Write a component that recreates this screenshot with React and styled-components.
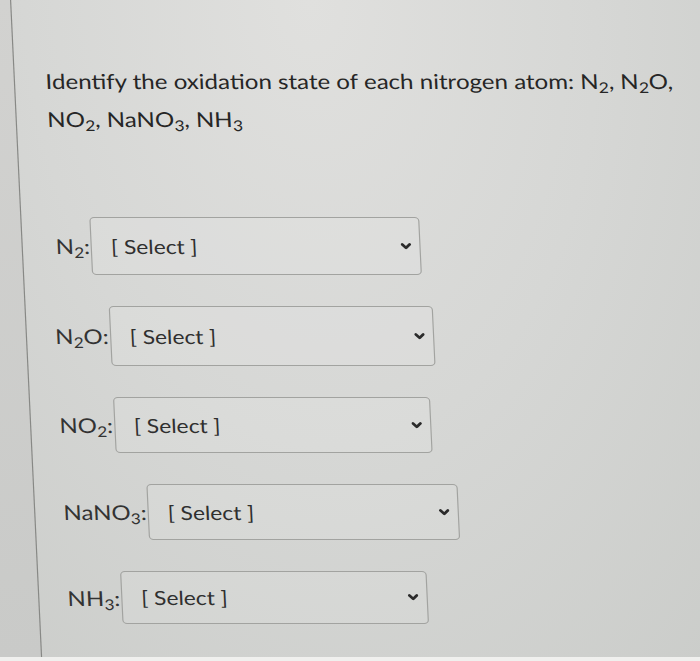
import React from 'react';
import styled, { createGlobalStyle } from 'styled-components';

// The reference is a photo of a screen: slightly skewed and stretched sideways.
const GlobalStyle = createGlobalStyle`
  html, body {
    margin: 0;
    padding: 0;
    background: #f0f0ee;
  }
  body {
    font-family: Lato, "Open Sans", sans-serif;
  }
`;

const Page = styled.div`
  width: 700px;
  height: 657px;
  overflow: hidden;
  background: linear-gradient(180deg, #d2d2d0 0%, #c9cac8 100%);
`;

const Sheet = styled.div`
  box-sizing: border-box;
  width: 640px;
  height: 700px;
  margin-left: 10px;
  padding: 62px 0 0 24px;
  border-left: 1.5px solid #878885;
  background: radial-gradient(ellipse at 40% 0%, #e0e0de 0%, #d6d7d5 45%, #c8cac7 100%);
  transform: skewX(2.7deg) scaleX(1.17);
  transform-origin: top left;
`;

const Question = styled.p`
  margin: 0 0 0 2px;
  font-size: 20.6px;
  line-height: 38px;
  color: #262626;
`;

const Sub = styled.sub`
  font-size: 72%;
  vertical-align: -0.28em;
  line-height: 0;
`;

const Rows = styled.div`
  display: flex;
  flex-direction: column;
  gap: 31px;
  margin-top: 79px;
`;

const Row = styled.div`
  display: flex;
  align-items: center;
  padding-left: ${(p) => p.$indent}px;
`;

const Label = styled.span`
  font-size: 20.5px;
  color: #333333;
  margin-right: 1px;
`;

const Dropdown = styled.div`
  box-sizing: border-box;
  display: flex;
  align-items: center;
  justify-content: space-between;
  width: ${(p) => p.$width}px;
  height: ${(p) => p.$height}px;
  padding: 0 7px 0 16px;
  border: 1.5px solid #a2a3a0;
  border-radius: 4px;
  background: rgba(255, 255, 255, 0.1);
  font-size: 19.5px;
  color: #2f2f2f;
`;

const Chevron = () => (
  <svg width="9" height="7" viewBox="0 0 9 7">
    <path d="M1.3 1.4 L4.5 4.9 L7.7 1.4" fill="none" stroke="#2b2b2b" strokeWidth="2.5" strokeLinecap="round" strokeLinejoin="round" />
  </svg>
);

const items = [
  { label: <>N<Sub>2</Sub>:</>, indent: 4, width: 282, height: 58 },
  { label: <>N<Sub>2</Sub>O:</>, indent: 0, width: 277, height: 60 },
  { label: <>NO<Sub>2</Sub>:</>, indent: 0, width: 271, height: 56 },
  { label: <>NaNO<Sub>3</Sub>:</>, indent: 0, width: 266, height: 56 },
  { label: <>NH<Sub>3</Sub>:</>, indent: 0, width: 262, height: 53 },
];

export default function App() {
  return (
    <>
      <GlobalStyle />
      <Page>
        <Sheet>
          <Question>
            Identify the oxidation state of each nitrogen atom: N<Sub>2</Sub>, N<Sub>2</Sub>O,
            <br />
            NO<Sub>2</Sub>, NaNO<Sub>3</Sub>, NH<Sub>3</Sub>
          </Question>
          <Rows>
            {items.map((it, i) => (
              <Row key={i} $indent={it.indent}>
                <Label>{it.label}</Label>
                <Dropdown $width={it.width} $height={it.height}>
                  <span>[ Select ]</span>
                  <Chevron />
                </Dropdown>
              </Row>
            ))}
          </Rows>
        </Sheet>
      </Page>
    </>
  );
}
